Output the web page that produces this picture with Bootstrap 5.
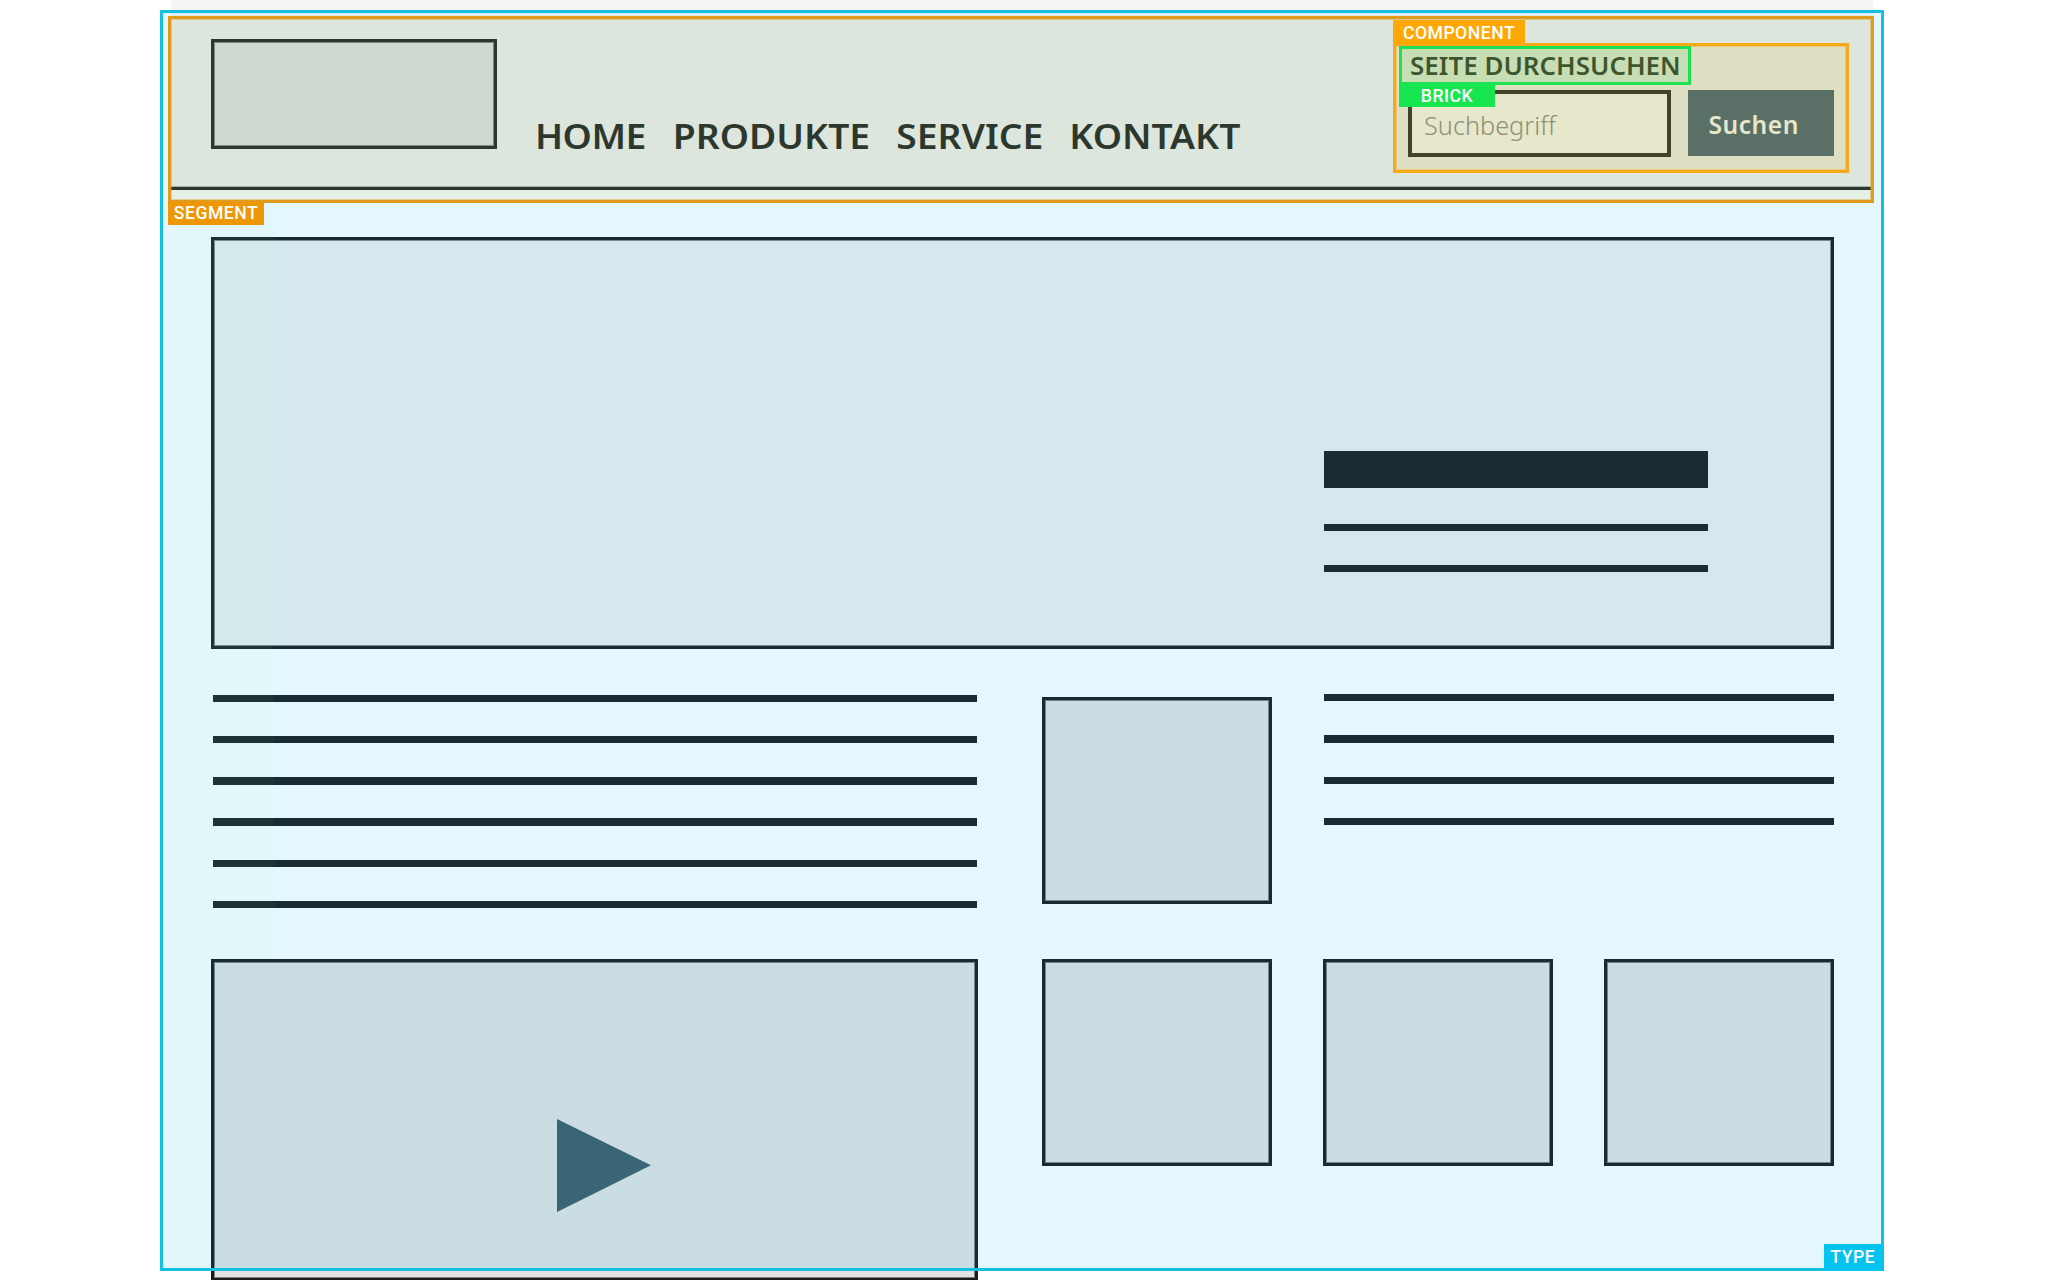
<!DOCTYPE html>
<html lang="de">
<head>
<meta charset="utf-8">
<title>Type, Segment, Component, Brick</title>
<meta name="viewport" content="width=device-width, initial-scale=1">
<link href="https://cdn.jsdelivr.net/npm/bootstrap@5.3.0/dist/css/bootstrap.min.css" rel="stylesheet">
<style>
  body { background: #fff; font-family: "Noto Sans", "Open Sans", sans-serif; color: #121212; }
  .stage { width: 2048px; height: 1280px; }
  .sheet { width: 1702px; margin-left: 171px; height: 1280px; }
  .site-head { height: 190.4px; background: #f4f4f4; border-bottom: 3px solid #121212; box-shadow: inset 0 -1px rgba(18,18,18,.3); padding: 39px 39px 0 40px; }
  .box { border: 3px solid #1a1a1a; background: #e2e2e2; box-shadow: inset 0 0 0 1px rgba(26,26,26,.5); }
  .logo-box { width: 285.5px; height: 110px; border-color: #121212; }
  .main-nav { margin: 73px 0 0 38.6px; gap: 24.5px; transform: scaleX(1.064); transform-origin: left; }
  .main-nav a { font-size: 35px; line-height: 48px; font-weight: 600; color: #121212; padding: 0; white-space: nowrap; }
  .main-nav a:first-child { letter-spacing: -.5px; margin-right: 1px; }
  .search-area { width: 426px; margin-top: 12px; }
  .search-title { font-size: 24.6px; line-height: 30px; font-weight: 600; margin: 0 0 9px 2px; white-space: nowrap; transform: scaleX(1.056); transform-origin: left; }
  .search-field { width: 263px; height: 67px; border: 4px solid #121212; border-radius: 0; background: #fff; font-size: 25.3px; font-weight: 300; padding: 3px 0 0 12px; }
  .search-field::placeholder { color: #808080; opacity: 1; }
  .search-btn { width: 146px; height: 66px; border: 0; border-radius: 0; background: #35536c; color: #fff; font-size: 24.6px; font-weight: 600; letter-spacing: .5px; padding: 5px 0 0 20.5px; text-align: left; }
  .search-btn:hover { background: #35536c; }
  .site-body { padding: 46.6px 39px 0 40px; }
  .hero { width: 1623px; height: 412px; background: #efefef; padding: 211.2px 0 0 1110.4px; }
  .bar { height: 7.4px; background: #1c1c1c; }
  .bar + .bar { margin-top: 33.9px; }
  .bar.thick { height: 37px; }
  .bar.thick + .bar { margin-top: 35.6px; }
  .hero .bar { width: 384px; }
  .upper { margin-top: 45.6px; height: 264px; }
  .copy-left { width: 764px; margin-left: 2px; }
  .copy-right { width: 510px; margin-left: 52px; margin-top: -.5px; }
  .thumb { width: 230px; height: 207px; }
  .upper .thumb { margin: 2px 0 0 65.6px; }
  .video { width: 767.4px; height: 322px; }
  .play { width: 94px; height: 93px; margin: 157px 0 0 343.1px; }
  .lower .thumb:nth-child(2) { margin-left: 64px; }
  .lower .thumb:nth-child(n+3) { margin-left: 50.6px; }
  /* annotation frames drawn over the page */
  .frame { border: 3px solid; }
  .tag { font-family: Roboto, sans-serif; font-weight: 500; color: #fff; font-size: 17.6px; line-height: 1; letter-spacing: .5px; white-space: nowrap; }
  .f-type { left: 160.4px; top: 10px; width: 1724px; height: 1261px; border-color: #14bfe3;
    background: linear-gradient(rgba(170,255,170,.035), rgba(170,255,170,.035)) 8px 191px / 103px 755px no-repeat,
                linear-gradient(rgba(170,255,170,.035), rgba(170,255,170,.035)) 8px 946px / 40px 309px no-repeat,
                rgba(0,182,232,.11); }
  .t-type { left: 1824px; top: 1244px; width: 60.4px; height: 27px; padding: 0 3px 0 0; background: #04c3ee; }
  .f-seg { left: 168.4px; top: 16.4px; width: 1706px; height: 187px; border-color: #e09b1d; background: rgba(238,188,75,.13); background-clip: padding-box; box-shadow: inset 0 0 0 1px rgba(224,155,29,.4); }
  .t-seg { left: 168px; top: 202px; width: 96px; height: 23px; background: #ed9706; }
  .f-comp { left: 1393.4px; top: 42.5px; width: 456px; height: 130px; border-color: #f6a919; background: rgba(250,170,0,.11); background-clip: padding-box; box-shadow: inset 0 0 0 1px rgba(246,169,25,.4); }
  .t-comp { left: 1393px; top: 20px; width: 132px; height: 24px; padding-top: 4px; background: #ffa704; }
  .f-brick { left: 1399px; top: 46px; width: 292px; height: 39.4px; border-color: #1fdf55; background: rgba(30,225,80,.12); background-clip: padding-box; }
  .t-brick { left: 1399px; top: 84px; width: 96px; height: 23px; padding-top: 2px; background: #18e650; }
</style>
</head>
<body>
<div class="stage position-relative overflow-hidden">
  <div class="sheet">
    <header class="site-head d-flex align-items-start">
      <div class="box logo-box flex-shrink-0"></div>
      <nav class="nav main-nav flex-nowrap">
        <a class="nav-link" href="#">HOME</a>
        <a class="nav-link" href="#">PRODUKTE</a>
        <a class="nav-link" href="#">SERVICE</a>
        <a class="nav-link" href="#">KONTAKT</a>
      </nav>
      <form class="search-area ms-auto">
        <div class="search-title">SEITE DURCHSUCHEN</div>
        <div class="d-flex justify-content-between">
          <input class="form-control search-field" type="text" placeholder="Suchbegriff">
          <button class="btn search-btn" type="button">Suchen</button>
        </div>
      </form>
    </header>
    <main class="site-body">
      <section class="box hero">
        <div class="bar thick"></div><div class="bar"></div><div class="bar"></div>
      </section>
      <section class="upper d-flex align-items-start">
        <div class="copy-left"><div class="bar"></div><div class="bar"></div><div class="bar"></div><div class="bar"></div><div class="bar"></div><div class="bar"></div></div>
        <div class="box thumb"></div>
        <div class="copy-right"><div class="bar"></div><div class="bar"></div><div class="bar"></div><div class="bar"></div></div>
      </section>
      <section class="lower d-flex align-items-start">
        <div class="box video flex-shrink-0">
          <svg class="play d-block" viewBox="0 0 94 93"><path d="M0 0 94 46.3 0 93Z" fill="#415b69"/></svg>
        </div>
        <div class="box thumb flex-shrink-0"></div>
        <div class="box thumb flex-shrink-0"></div>
        <div class="box thumb flex-shrink-0"></div>
      </section>
    </main>
  </div>

  <div class="frame f-type position-absolute pe-none"></div>
  <div class="frame f-seg position-absolute pe-none"></div>
  <div class="frame f-comp position-absolute pe-none"></div>
  <div class="frame f-brick position-absolute pe-none"></div>
  <div class="tag t-type position-absolute d-flex align-items-center justify-content-center">TYPE</div>
  <div class="tag t-seg position-absolute d-flex align-items-center justify-content-center">SEGMENT</div>
  <div class="tag t-comp position-absolute d-flex align-items-center justify-content-center">COMPONENT</div>
  <div class="tag t-brick position-absolute d-flex align-items-center justify-content-center">BRICK</div>
</div>
<script src="https://cdn.jsdelivr.net/npm/bootstrap@5.3.0/dist/js/bootstrap.bundle.min.js"></script>
</body>
</html>
